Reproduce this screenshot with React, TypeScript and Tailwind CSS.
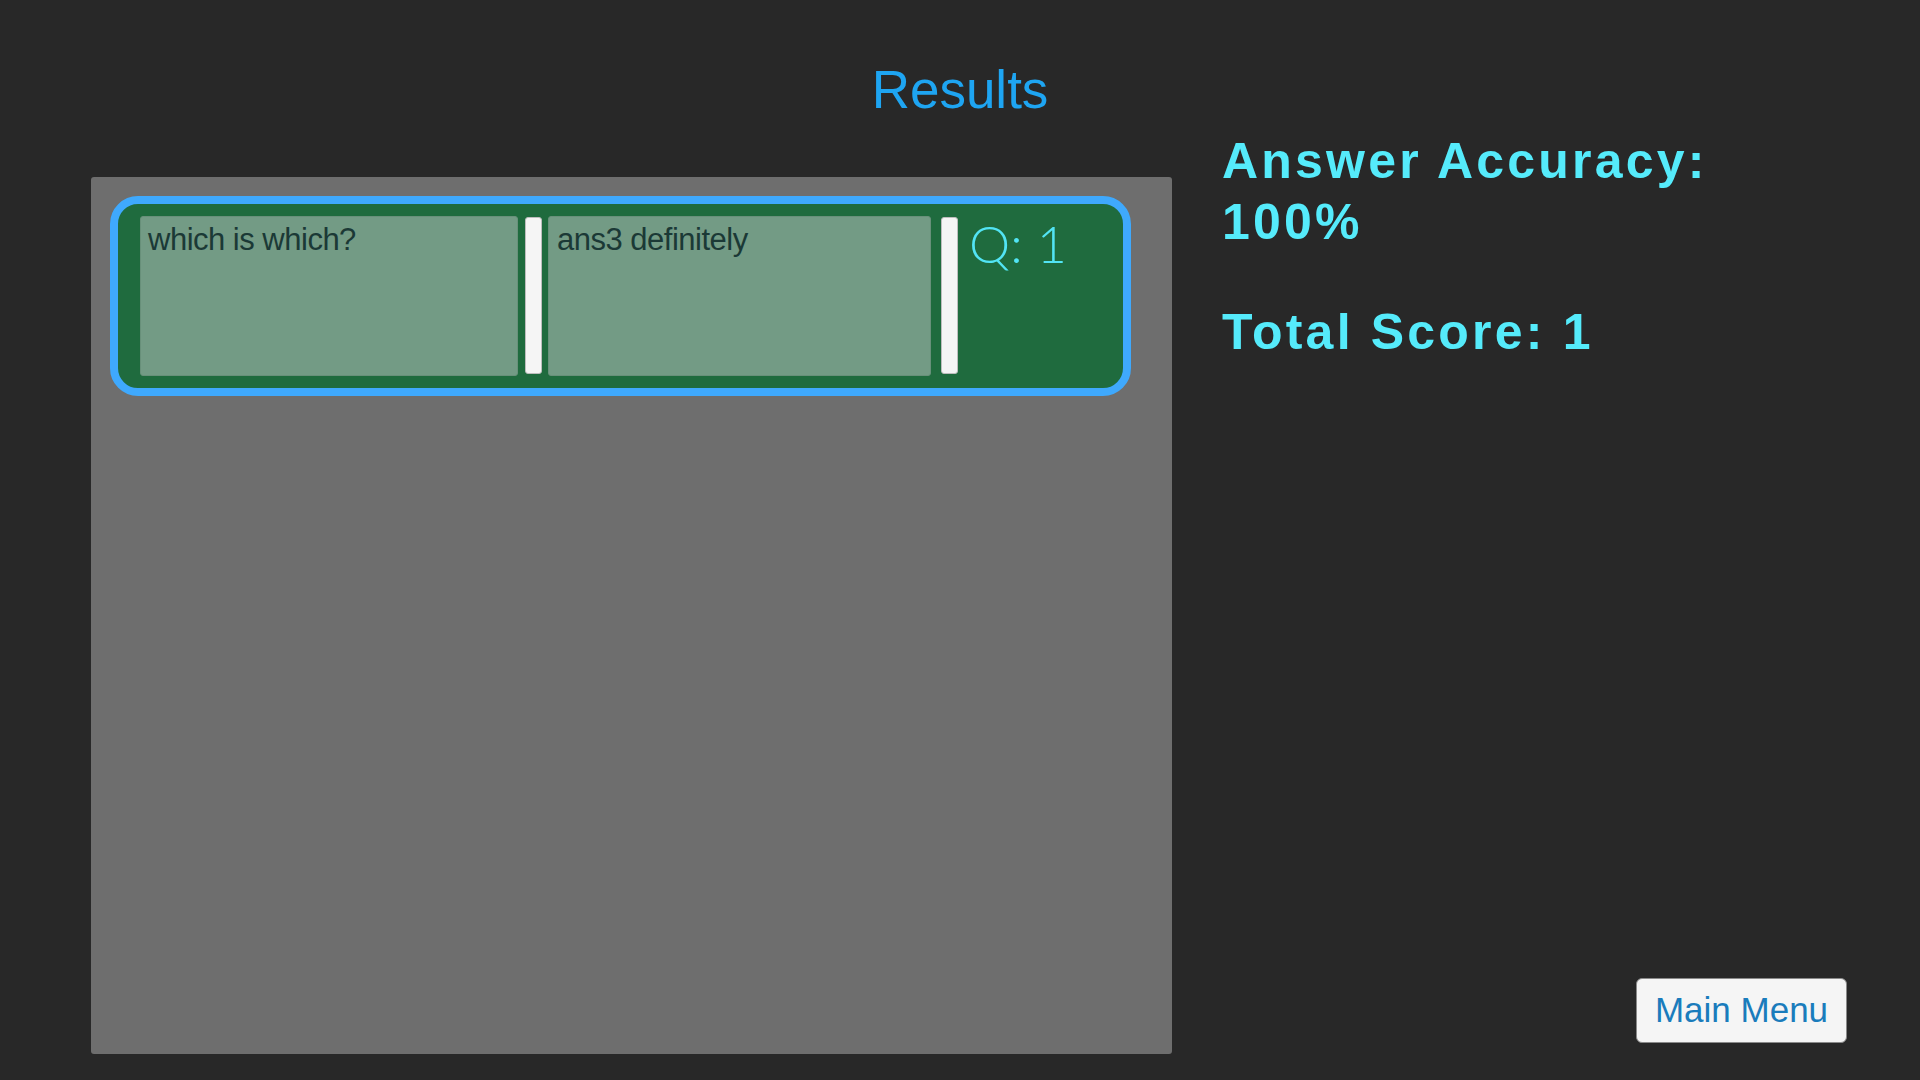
const results = [
  { question: 'which is which?', answer: 'ans3 definitely', index: 1 },
]

function ResultCard({ question, answer, index }: { question: string; answer: string; index: number }) {
  return (
    <div className="w-[1021px] h-[200px] rounded-[28px] border-[8px] border-[#3fa9fd] bg-[#1f6b3e] pl-[22px] pt-[12px] pb-[12px] flex items-start">
      <div className="w-[378px] h-[160px] rounded-[3px] border border-[#68907a] bg-[#739b85] pl-[7px] text-[31px] tracking-[-0.5px] text-[#1b3936]">
        {question}
      </div>
      <div className="ml-[7px] mt-[1px] w-[17px] h-[157px] rounded-[3px] border border-[#bdbdbd] bg-[#f5f5f5]" />
      <div className="ml-[6px] w-[383px] h-[160px] rounded-[3px] border border-[#68907a] bg-[#739b85] pl-[8px] text-[31px] tracking-[-0.5px] text-[#1b3936]">
        {answer}
      </div>
      <div className="ml-[10px] mt-[1px] w-[17px] h-[157px] rounded-[3px] border border-[#bdbdbd] bg-[#f5f5f5]" />
      <div className="ml-[11px] mt-[1px] text-[52px] leading-none font-light text-[#52e4f4] font-['Lato',sans-serif]">
        Q: {index}
      </div>
    </div>
  )
}

export default function App() {
  return (
    <div className="w-[1920px] h-[1080px] bg-[#282828] overflow-hidden flex flex-col font-['Liberation_Sans',Arial,sans-serif]">
      {/* title */}
      <div className="pt-[59px] h-[122px] text-center text-[53px] leading-[61px] text-[#1ea5f2]">
        Results
      </div>

      <div className="flex flex-1">
        {/* results list */}
        <div className="ml-[91px] mt-[55px] w-[1081px] h-[877px] rounded-[3px] bg-[#6e6e6e] pl-[19px] pt-[19px]">
          {results.map((r) => (
            <ResultCard key={r.index} {...r} />
          ))}
        </div>

        {/* summary */}
        <div className="flex-1 flex flex-col pl-[50px] pr-[73px]">
          <div className="mt-[9px] text-[50px] leading-[61px] font-bold tracking-[3.2px] text-[#55ebfb]">
            <p>Answer Accuracy:</p>
            <p>100%</p>
            <p className="mt-[49px]">Total Score: 1</p>
          </div>
          <button className="mt-auto mb-[37px] self-end w-[211px] h-[65px] rounded-[6px] border border-[#8a8a8a] bg-[#f5f5f5] text-[35px] text-[#1a7cbc] flex items-center justify-center">
            Main Menu
          </button>
        </div>
      </div>
    </div>
  )
}
